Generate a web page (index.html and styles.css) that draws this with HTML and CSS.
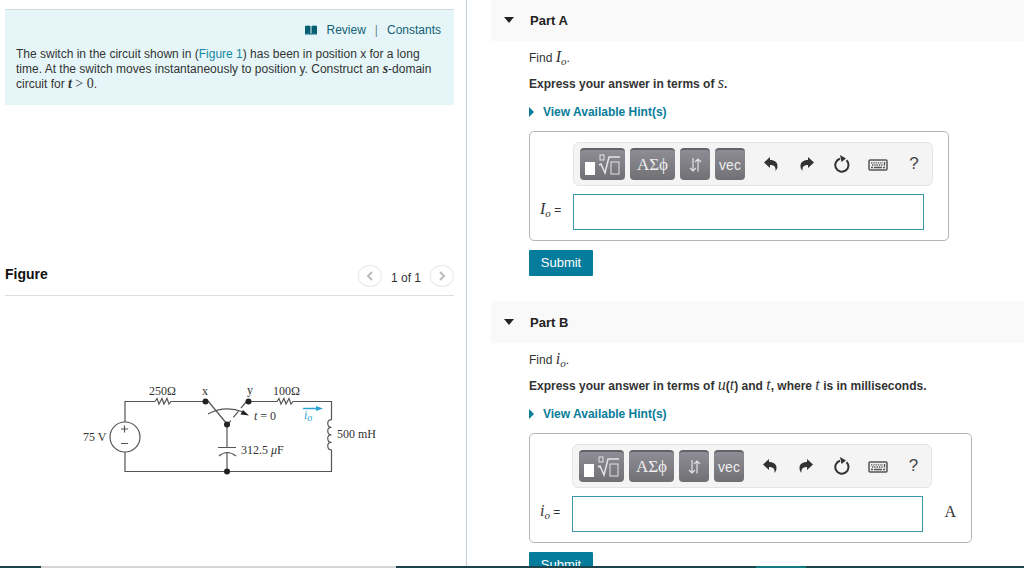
FILE: index.html
```html
<!DOCTYPE html>
<html lang="en">
<head>
  <meta charset="UTF-8">
  <title>Circuit problem</title>
  <link rel="stylesheet" href="styles.css">
</head>
<body>
  <!-- Shared icons -->
  <svg class="sprite" aria-hidden="true">
    <symbol id="icon-template" viewBox="0 0 36 22">
      <rect x="0" y="8" width="10" height="13" fill="#fff"/>
      <rect x="15" y="1" width="4" height="5" fill="none" stroke="#e4e4e8"/>
      <path d="M14 11l2-1 4 9L24 3h11" fill="none" stroke="#e4e4e8" stroke-width="1.500"/>
      <rect x="26" y="8" width="8" height="12" fill="none" stroke="#e4e4e8"/>
    </symbol>
    <symbol id="icon-arrows" viewBox="0 0 12 16">
      <path d="M3.500 1v13M.500 11l3 3 3-3M8.500 14.500V2M5.500 5l3-3 3 3" fill="none" stroke="#e4e4e8" stroke-width="1.200"/>
    </symbol>
    <symbol id="icon-undo" viewBox="0 0 14 14">
      <path d="M0 5.500L6 0v3c5 0 7.500 2.500 7.500 6 0 2-.7 3.500-2 5 .4-4-1-6-5.500-6v3z" fill="#333"/>
    </symbol>
    <symbol id="icon-redo" viewBox="0 0 14 14">
      <path d="M14 5.500L8 0v3C3 3 .500 5.500.500 9c0 2 .7 3.500 2 5-.4-4 1-6 5.500-6v3z" fill="#333"/>
    </symbol>
    <symbol id="icon-reset" viewBox="0 0 16 18">
      <path d="M12.500 5.300A6.600 6.600 0 1 1 6 3.700" fill="none" stroke="#333" stroke-width="2"/>
      <path d="M6 0l6 3.500L7.500 7z" fill="#333"/>
    </symbol>
    <symbol id="icon-keyboard" viewBox="0 0 20 14">
      <rect x="1" y="3" width="18" height="10" rx="1" fill="#eee" stroke="#555" stroke-width="1.500"/>
      <path d="M3 5.800h12M4 8h11" stroke="#555" stroke-width="1.300" stroke-dasharray="1.300 1"/>
      <path d="M3 10.500h2M6 10.500h8M15 10.500h2M16.500 5v3.500" stroke="#555" stroke-width="1.300"/>
    </symbol>
  </svg>

  <div class="page">
    <section class="left">
      <div class="intro">
        <div class="intro-links">
          <svg class="book" viewBox="0 0 12 10" aria-hidden="true">
            <path d="M0 1Q3 0 5.500 1v8Q3 8 0 9zM6.500 1q3-1 5.500 0v8q-3-1-5.500 0z" fill="#045f73"/>
            <path d="M0 9h12" stroke="#045f73"/>
          </svg>
          <a href="#">Review</a>
          <span class="bar">|</span>
          <a href="#">Constants</a>
        </div>
        <p>The switch in the circuit shown in (<a class="fig-link" href="#figure">Figure 1</a>) has been in position x for a long time. At the switch moves instantaneously to position y. Construct an <b class="math">s</b>-domain circuit for <b class="math">t</b> <span class="num">&gt; 0</span>.</p>
      </div>

      <div class="figure-head" id="figure">
        <h2>Figure</h2>
        <div class="pager">
          <button class="round" aria-label="Previous figure"><svg viewBox="0 0 8 12"><path d="M6 2L2 6l4 4"/></svg></button>
          <span>1 of 1</span>
          <button class="round" aria-label="Next figure"><svg viewBox="0 0 8 12"><path d="M2 2l4 4-4 4"/></svg></button>
        </div>
      </div>

      <svg class="circuit" viewBox="80 380 300 96" role="img" aria-label="Circuit diagram">
        <!-- wires -->
        <g class="wire">
          <path d="M125 422v-20.500h30l2-3 2 5.500 3-5.500 2 5.500 3-5.500 2 5.500 2-2.500H205"/>
          <path d="M249 401.500h28l2-3 2 5.500 3-5.500 2 5.500 3-5.500 2 5.500 2-2.500H331.500V420"/>
          <path d="M331.500 420c-5-1-5 7 0 7.500-5-1-5 7 0 7.500-5-1-5 7 0 7.500-5-1-5 7 0 7.500v21.500H125V452"/>
          <circle cx="125" cy="437" r="15"/>
          <path d="M121 429h7M124.500 425.500v7M121 443.500h7"/>
          <path d="M208 401l19 23"/>
          <path d="M246 402l-18 22" stroke-dasharray="8 4"/>
          <path d="M208 414q17-9 35-2"/>
          <path d="M227 424v23.500M218 447.500h18M219 456q8-7 17 0M227 452.500v19"/>
        </g>
        <g class="dot">
          <circle cx="205.500" cy="401.500" r="3"/>
          <circle cx="248.500" cy="401.500" r="3"/>
          <circle cx="227" cy="424.500" r="3"/>
          <circle cx="227" cy="471.500" r="3"/>
          <path d="M249 415.500l-8.500-1 2.500-4.500z"/>
        </g>
        <path class="current" d="M303 408.500h14"/>
        <path class="current-tip" d="M316 406l7 2.500-7 2.500z"/>
        <!-- labels -->
        <g class="label">
          <text x="149" y="395">250Ω</text>
          <text x="202" y="395">x</text>
          <text x="247" y="394">y</text>
          <text x="273" y="395">100Ω</text>
          <text x="83" y="441">75 V</text>
          <text x="254" y="420"><tspan class="it">t</tspan> = 0</text>
          <text x="241" y="454">312.5 <tspan class="it">μ</tspan>F</text>
          <text x="337" y="438">500 mH</text>
          <text class="it blue" x="304" y="419">i<tspan class="small" dy="2">o</tspan></text>
        </g>
      </svg>
    </section>

    <main class="right">
      <section class="part">
        <header><button class="caret" aria-label="Collapse Part A"></button><h2>Part A</h2></header>
        <div class="part-body">
          <p class="find">Find <span class="math">I<sub>o</sub></span>.</p>
          <p class="express">Express your answer in terms of <span class="math">s</span>.</p>
          <a class="hints" href="#">View Available Hint(s)</a>
          <div class="answer">
            <label class="math-label" for="answerA"><span class="math">I<sub>o</sub></span> =</label>
            <div class="editor">
              <div class="toolbar">
                <button class="key wide" aria-label="Templates"><svg class="i-template"><use href="#icon-template"/></svg></button>
                <button class="key wide greek">ΑΣϕ</button>
                <button class="key" aria-label="Subscript and superscript"><svg class="i-arrows"><use href="#icon-arrows"/></svg></button>
                <button class="key">vec</button>
                <div class="tools">
                  <button aria-label="Undo"><svg class="i-undo"><use href="#icon-undo"/></svg></button>
                  <button aria-label="Redo"><svg class="i-undo"><use href="#icon-redo"/></svg></button>
                  <button aria-label="Reset"><svg class="i-reset"><use href="#icon-reset"/></svg></button>
                  <button aria-label="Keyboard"><svg class="i-keyboard"><use href="#icon-keyboard"/></svg></button>
                  <button>?</button>
                </div>
              </div>
              <input type="text" id="answerA">
            </div>
          </div>
          <button class="submit">Submit</button>
        </div>
      </section>

      <section class="part">
        <header><button class="caret" aria-label="Collapse Part B"></button><h2>Part B</h2></header>
        <div class="part-body">
          <p class="find">Find <span class="math">i<sub>o</sub></span>.</p>
          <p class="express">Express your answer in terms of <span class="math">u</span>(<span class="math">t</span>) and <span class="math">t</span>, where <span class="math">t</span> is in milliseconds.</p>
          <a class="hints" href="#">View Available Hint(s)</a>
          <div class="answer with-unit">
            <label class="math-label" for="answerB"><span class="math">i<sub>o</sub></span> =</label>
            <div class="editor">
              <div class="toolbar">
                <button class="key wide" aria-label="Templates"><svg class="i-template"><use href="#icon-template"/></svg></button>
                <button class="key wide greek">ΑΣϕ</button>
                <button class="key" aria-label="Subscript and superscript"><svg class="i-arrows"><use href="#icon-arrows"/></svg></button>
                <button class="key">vec</button>
                <div class="tools">
                  <button aria-label="Undo"><svg class="i-undo"><use href="#icon-undo"/></svg></button>
                  <button aria-label="Redo"><svg class="i-undo"><use href="#icon-redo"/></svg></button>
                  <button aria-label="Reset"><svg class="i-reset"><use href="#icon-reset"/></svg></button>
                  <button aria-label="Keyboard"><svg class="i-keyboard"><use href="#icon-keyboard"/></svg></button>
                  <button>?</button>
                </div>
              </div>
              <input type="text" id="answerB">
            </div>
            <span class="unit">A</span>
          </div>
          <button class="submit">Submit</button>
        </div>
      </section>
    </main>
  </div>

  <div class="bottom-strip"></div>
</body>
</html>
```
FILE: styles.css
```css
* {
  box-sizing: border-box;
}

body {
  margin: 0;
  background-color: white;
  color: #333;
  font-family: "Liberation Sans", Arial, sans-serif;
  font-size: 12px;
}

h2, p {
  margin: 0;
}

button {
  font-family: inherit;
  padding: 0;
  border: none;
  cursor: pointer;
}

a {
  text-decoration: none;
}

.sprite {
  display: none;
}

.page {
  display: grid;
  grid-template-columns: 467fr 557fr;
  height: 100vh;
  overflow: hidden;
}

.math {
  font-family: "Liberation Serif", serif;
  font-style: italic;
  font-size: 16px;
  font-weight: normal;
  line-height: 12px;
}

.math sub {
  font-size: 11px;
  line-height: 1px;
  vertical-align: -3px;
}

/* Left side */
.left {
  padding: 9px 12px 0 5px;
  border-right: 1px solid #c3cfd8;
}

.intro {
  height: 96px;
  padding: 12px 11px;
  border-top: 1px solid #cfdcdc;
  background-color: #e6f6f8;
}

.intro-links {
  display: flex;
  justify-content: flex-end;
  align-items: center;
  gap: 9px;
  height: 16px;
  padding-right: 2px;
}

.intro-links a {
  color: #145f73;
}

.intro-links .bar {
  color: #6b8b94;
}

.book {
  width: 12px;
  height: 10px;
}

.intro p {
  margin-top: 9px;
  line-height: 15px;
}

.intro .math {
  font-size: 14px;
  font-weight: bold;
}

.fig-link {
  color: #1688a3;
}

.num {
  font-family: "Liberation Serif", serif;
  font-size: 14px;
  line-height: 12px;
}

.figure-head {
  display: flex;
  justify-content: space-between;
  align-items: center;
  margin-top: 153px;
  padding-bottom: 6px;
  border-bottom: 1px solid #ddd;
}

.figure-head h2 {
  color: #111;
  font-size: 14px;
}

.pager {
  display: flex;
  align-items: center;
  gap: 9px;
  height: 31px;
  padding-top: 4px;
}

.pager span {
  padding-top: 4px;
}

.round {
  display: flex;
  justify-content: center;
  align-items: center;
  width: 24px;
  height: 22px;
  border: 1px solid #e8e8e8;
  border-radius: 50%;
  background-color: white;
}

.round svg {
  width: 8px;
  height: 12px;
  fill: none;
  stroke: #bbb;
  stroke-width: 2;
}

.circuit {
  display: block;
  width: 300px;
  height: 96px;
  margin: 84px auto 0;
}

.wire {
  fill: none;
  stroke: #555;
  stroke-width: 1.2;
}

.dot {
  fill: #222;
}

.label {
  fill: #333;
  font-family: "Liberation Serif", serif;
  font-size: 12px;
}

.it {
  font-style: italic;
}

.blue {
  fill: #2ba3d4;
}

.small {
  font-size: 10px;
}

.current {
  stroke: #2ba3d4;
  stroke-width: 1.5;
}

.current-tip {
  fill: #2ba3d4;
}

/* Right side */
.right {
  margin-top: -1px;
  padding-left: 24px;
}

.part {
  height: 302px;
}

.part header {
  display: flex;
  align-items: center;
  gap: 16px;
  height: 42px;
  padding-left: 13px;
  background-color: #f9f9f9;
}

.part header h2 {
  color: #222;
  font-size: 13px;
}

.caret {
  width: 10px;
  height: 6px;
  background-color: #222;
  clip-path: polygon(0 0, 100% 0, 50% 100%);
}

.part-body {
  padding: 8px 0 0 38px;
}

.find {
  line-height: 18px;
}

.express {
  margin-top: 8px;
  font-weight: bold;
  line-height: 18px;
}

.hints {
  display: flex;
  align-items: center;
  gap: 9px;
  margin-top: 10px;
  color: #077d99;
  font-weight: bold;
  line-height: 18px;
}

.hints::before {
  content: "";
  width: 5px;
  height: 10px;
  background-color: #077d99;
  clip-path: polygon(0 0, 100% 50%, 0 100%);
}

.answer {
  display: flex;
  max-width: 420px;
  height: 110px;
  margin-top: 10px;
  padding: 10px 15px 0 10px;
  border: 1px solid #b5b5b5;
  border-radius: 5px;
}

.with-unit {
  max-width: 443px;
}

.math-label {
  width: 33px;
  padding-top: 61px;
}

.with-unit .math-label {
  width: 32px;
}

.editor {
  flex: 1;
  max-width: 361px;
}

.toolbar {
  display: flex;
  align-items: center;
  gap: 5px;
  height: 44px;
  padding-left: 6px;
  border: 1px solid #e4e4e4;
  border-radius: 6px;
  background-color: #f4f4f4;
}

.key {
  display: flex;
  justify-content: center;
  align-items: center;
  width: 30px;
  height: 32px;
  border-top: 2px solid #626268;
  border-radius: 4px;
  background: linear-gradient(#8e8d95, #707074);
  color: #eee;
  font-size: 14px;
}

.wide {
  width: 45px;
}

.greek {
  font-family: "Liberation Serif", serif;
  font-size: 17px;
}

.tools {
  display: flex;
  flex: 1;
  margin-left: 3px;
}

.tools button {
  display: flex;
  flex: 1;
  justify-content: center;
  align-items: center;
  height: 32px;
  background: none;
  color: #444;
  font-size: 17px;
}

.i-template {
  width: 36px;
  height: 22px;
}

.i-arrows {
  width: 13px;
  height: 16px;
}

.i-undo {
  width: 14px;
  height: 14px;
}

.i-reset {
  width: 16px;
  height: 18px;
}

.i-keyboard {
  width: 20px;
  height: 14px;
}

.editor input {
  display: block;
  width: calc(100% - 9px);
  height: 36px;
  margin-top: 8px;
  padding: 0 8px;
  border: 1px solid #3b98a8;
  font-size: 15px;
}

.unit {
  padding: 59px 0 0 12px;
  font-family: "Liberation Serif", serif;
  font-size: 16px;
}

.submit {
  display: block;
  width: 64px;
  height: 26px;
  margin-top: 9px;
  padding-bottom: 2px;
  background-color: #057c9b;
  border-radius: 1px;
  color: white;
  font-size: 13px;
}

.bottom-strip {
  position: fixed;
  left: 0;
  right: 0;
  bottom: 0;
  height: 2px;
  background: linear-gradient(to right, #1e444b 4%, #d5d5d5 4% 38.7%, #1e444b 38.7% 73.8%, #127c80 73.8% 78.7%, #1e444b 78.7%);
}
```
